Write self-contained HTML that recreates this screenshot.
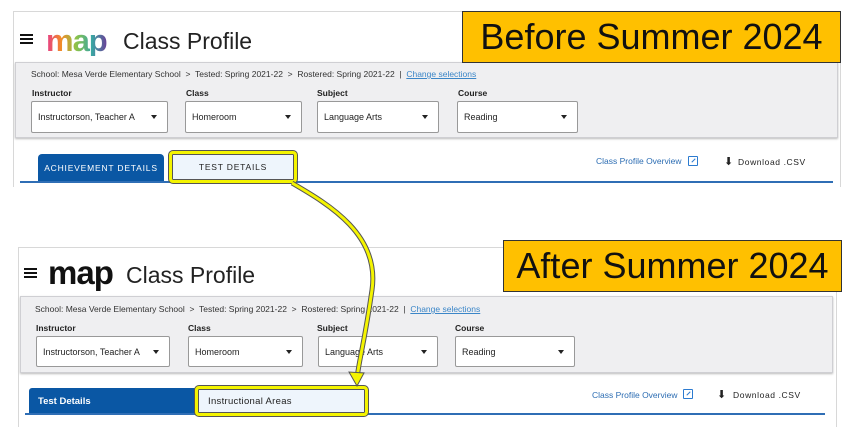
<!DOCTYPE html>
<html><head><meta charset="utf-8"><style>
*{margin:0;padding:0;box-sizing:border-box}
body{width:850px;height:434px;background:#fff;position:relative;overflow:hidden;font-family:"Liberation Sans",sans-serif;color:#222}
.a{position:absolute}
.panel{position:absolute;border:1px solid #d8d8d8;border-bottom:none;background:#fff}
.gray{position:absolute;background:#efeff1;border:1px solid #cfcfd3;box-shadow:0 1px 2px #bbb}
.bc{position:absolute;font-size:8.5px;color:#333;white-space:nowrap}
.bc u{color:#3b86c8}
.lbl{position:absolute;font-size:8.5px;font-weight:bold;color:#222}
.dd{position:absolute;background:#fff;border:1px solid #999;border-radius:2px;font-size:9px;padding-left:6px;display:flex;align-items:center}
.dd:after{content:"";position:absolute;right:10px;top:50%;margin-top:-2px;border:3px solid transparent;border-top:4px solid #222;border-bottom:none}
.ham{position:absolute;width:13px;height:10px;border-top:2.5px solid #111;border-bottom:2.5px solid #111}
.ham:after{content:"";position:absolute;left:0;right:0;top:1.5px;border-top:2.5px solid #111}
.title{position:absolute;font-size:23px;color:#222}
.yb{position:absolute;background:#ffc000;border:1px solid #333;font-family:"Liberation Sans",sans-serif;font-size:36px;color:#111;display:flex;align-items:center;justify-content:center}
.link{position:absolute;font-size:8.5px;color:#2c6db3}
.ext{position:absolute;width:10px;height:10px;border:1.5px solid #2c7bd0;border-radius:1px}
.ext:after{content:"";position:absolute;left:2px;top:3px;width:5px;border-top:1.5px solid #2c7bd0;transform:rotate(-45deg)}
.dl{position:absolute;font-size:8.5px;letter-spacing:.6px;color:#222}
.line{position:absolute;height:2px;background:#2f6eb5}
.hl{position:absolute;border:3px solid #f4f400;border-radius:4px;box-shadow:0 0 0 1px #555,inset 0 0 0 1px #555;background:#eef5fc;font-size:9px;display:flex;align-items:center}
</style></head><body>

<!-- TOP -->
<div class="panel" style="left:13px;top:11px;width:828px;height:176px"></div>
<div class="ham" style="left:20px;top:34px"></div>
<div class="a" style="left:46px;top:26px;font-size:31px;font-weight:bold;letter-spacing:-1px;background:linear-gradient(90deg,#e6398a,#f28c28,#8bc34a,#3aa7a3,#6c3f98);-webkit-background-clip:text;color:transparent;line-height:30px">map</div>
<div class="title" style="left:123px;top:28px">Class Profile</div>
<div class="gray" style="left:15px;top:62px;width:823px;height:76px"></div>
<div class="bc" style="left:31px;top:69px">School: Mesa Verde Elementary School &nbsp;&gt;&nbsp; Tested: Spring 2021-22 &nbsp;&gt;&nbsp; Rostered: Spring 2021-22 &nbsp;| &nbsp;<u>Change selections</u></div>
<div class="lbl" style="left:32px;top:88px">Instructor</div>
<div class="lbl" style="left:186px;top:88px">Class</div>
<div class="lbl" style="left:317px;top:88px">Subject</div>
<div class="lbl" style="left:458px;top:88px">Course</div>
<div class="dd" style="left:31px;top:101px;width:137px;height:32px">Instructorson, Teacher A</div>
<div class="dd" style="left:185px;top:101px;width:117px;height:32px">Homeroom</div>
<div class="dd" style="left:317px;top:101px;width:122px;height:32px">Language Arts</div>
<div class="dd" style="left:457px;top:101px;width:121px;height:32px">Reading</div>
<div class="a" style="left:38px;top:154px;width:126px;height:28px;background:#0a57a4;border-radius:4px 4px 0 0;color:#fff;font-size:8.5px;letter-spacing:.8px;display:flex;align-items:center;justify-content:center">ACHIEVEMENT DETAILS</div>
<div class="line" style="left:20px;top:181px;width:813px"></div>
<div class="hl" style="left:169px;top:151px;width:128px;height:32px;justify-content:center;letter-spacing:.8px;font-size:8.5px">TEST DETAILS</div>
<div class="link" style="left:596px;top:156px">Class Profile Overview</div>
<div class="ext" style="left:688px;top:156px"></div>
<div class="a" style="left:724px;top:155px;font-size:11px">&#11015;</div>
<div class="dl" style="left:738px;top:157px">Download .CSV</div>
<div class="yb" style="left:462px;top:11px;width:379px;height:52px">Before Summer 2024</div>

<!-- BOTTOM -->
<div class="panel" style="left:18px;top:247px;width:819px;height:180px"></div>
<div class="ham" style="left:24px;top:268px"></div>
<div class="a" style="left:48px;top:256px;font-size:33px;font-weight:bold;letter-spacing:-1px;color:#111;line-height:34px">map</div>
<div class="title" style="left:126px;top:262px">Class Profile</div>
<div class="gray" style="left:20px;top:296px;width:813px;height:77px"></div>
<div class="bc" style="left:35px;top:304px">School: Mesa Verde Elementary School &nbsp;&gt;&nbsp; Tested: Spring 2021-22 &nbsp;&gt;&nbsp; Rostered: Spring 2021-22 &nbsp;| &nbsp;<u>Change selections</u></div>
<div class="lbl" style="left:36px;top:323px">Instructor</div>
<div class="lbl" style="left:188px;top:323px">Class</div>
<div class="lbl" style="left:317px;top:323px">Subject</div>
<div class="lbl" style="left:455px;top:323px">Course</div>
<div class="dd" style="left:36px;top:336px;width:134px;height:31px">Instructorson, Teacher A</div>
<div class="dd" style="left:188px;top:336px;width:115px;height:31px">Homeroom</div>
<div class="dd" style="left:318px;top:336px;width:120px;height:31px">Language Arts</div>
<div class="dd" style="left:455px;top:336px;width:120px;height:31px">Reading</div>
<div class="a" style="left:29px;top:388px;width:168px;height:26px;background:#0a57a4;border-radius:3px 3px 0 0;color:#fff;font-size:9.5px;font-weight:bold;padding-left:9px;display:flex;align-items:center">Test Details</div>
<div class="line" style="left:25px;top:413px;width:800px"></div>
<div class="hl" style="left:195px;top:386px;width:173px;height:30px;padding-left:10px;font-size:9.5px;letter-spacing:.3px">Instructional Areas</div>
<div class="link" style="left:592px;top:390px">Class Profile Overview</div>
<div class="ext" style="left:683px;top:389px"></div>
<div class="a" style="left:717px;top:388px;font-size:11px">&#11015;</div>
<div class="dl" style="left:733px;top:390px">Download .CSV</div>
<div class="yb" style="left:503px;top:240px;width:339px;height:52px">After Summer 2024</div>

<svg class="a" style="left:0;top:0" width="850" height="434">
<path d="M292 183 C330 205,380 235,372 290 S360 355,357 378" fill="none" stroke="#555" stroke-width="5"/>
<path d="M292 183 C330 205,380 235,372 290 S360 355,357 378" fill="none" stroke="#f4f400" stroke-width="3"/>
<path d="M349 372 L357 386 L364 373 Z" fill="#f4f400" stroke="#555" stroke-width="1"/>
</svg>
</body></html>
